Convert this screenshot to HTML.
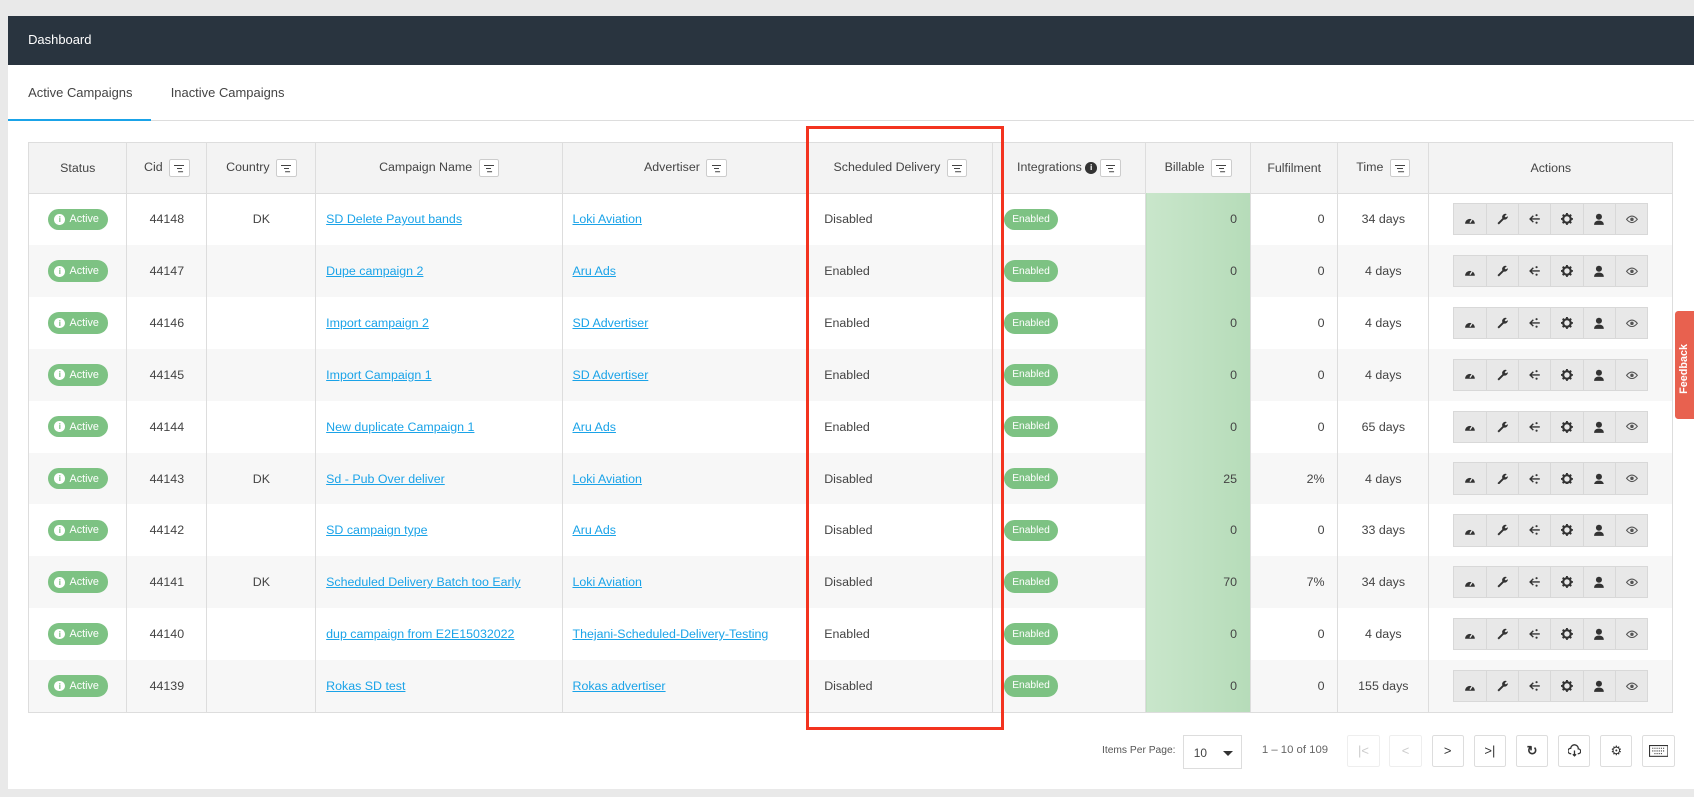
<!DOCTYPE html>
<html><head><meta charset="utf-8">
<style>
html,body{margin:0;padding:0;background:#e9e9e9;overflow:hidden;width:1694px;height:797px}
#w{zoom:1.0804;width:1568px;height:738px;position:relative;font-family:"Liberation Sans",sans-serif;font-size:11.5px;color:#444}
.card{position:absolute;left:7px;top:15px;width:1561px;height:715px;background:#fff}
.hdr{position:absolute;left:7px;top:15px;width:1561px;height:45px;background:#29343f;color:#fff;font-size:12px}
.hdr span{position:absolute;left:19px;top:15px}
.tab{position:absolute;top:79px;font-size:12px;color:#444}
.ul{position:absolute;left:7px;top:110px;width:133px;height:2px;background:#1aa3e8}
.bl{position:absolute;left:140px;top:111px;width:1428px;height:1px;background:#ddd}
table{position:absolute;left:26px;border-collapse:collapse;table-layout:fixed;width:1522px;border:1px solid #ddd}
td,th{border-left:1px solid #ddd;border-right:1px solid #ddd;height:48px;padding:0;font-weight:normal;font-size:11.5px}
th{background:#f3f3f3;height:47px;color:#444}
tr.e td{background:#f7f7f7}
td.c{text-align:center}
td.r{text-align:right;padding-right:12px}
td.l{padding-left:9px}
a{color:#1aa3e8;text-decoration:underline}
.fb{display:inline-block;width:19px;height:16px;border:1px solid #ccc;background:#fff;vertical-align:middle;margin-left:6px;border-radius:2px;position:relative;box-sizing:border-box}
.fb:before{content:"";position:absolute;left:4px;top:4px;width:9px;height:1px;background:#444}
.fb:after{content:"";position:absolute;left:6px;top:7px;width:5px;height:1px;background:#444;box-shadow:1px 3px 0 -0px #444}
.act{display:inline-flex;align-items:center;background:#7dc283;color:#fff;border-radius:10px;font-size:10px;height:20px;padding:0 8px 0 6px;box-sizing:border-box}
.act i{display:inline-block;width:10px;height:10px;border-radius:50%;background:#fff;color:#7dc283;font-style:normal;font-weight:bold;font-size:8px;text-align:center;line-height:10px;margin-right:4px}
.en{display:inline-flex;align-items:center;background:#7dc283;color:#fff;border-radius:10px;font-size:9.5px;height:20px;padding:0 8px;box-sizing:border-box}
td.bill{background:linear-gradient(90deg,#c9e6cb,#b6dcb9)!important;text-align:right;padding-right:12px}
.ag{display:inline-flex;border:1px solid #d8d8d8;background:#e8e8e8;vertical-align:middle}
.ag span{width:29px;height:28px;border-right:1px solid #d8d8d8;display:flex;align-items:center;justify-content:center}
.ag span:last-child{border-right:0}
.red{position:absolute;left:746px;top:117px;width:178px;height:553px;border:3px solid #f3331f}
.pg{position:absolute;top:680px;width:30px;height:30px;border:1px solid #ddd;border-radius:2px;box-sizing:border-box;display:flex;align-items:center;justify-content:center;color:#333;font-size:12px;background:#fff}
.fbk{position:absolute;left:1550px;top:288px;width:18px;height:100px;background:#e8614f;border-radius:3px 0 0 3px}
</style></head><body><div id="w">
<div class="card"></div>
<div class="hdr"><span>Dashboard</span></div>
<div class="tab" style="left:26px">Active Campaigns</div>
<div class="tab" style="left:158px">Inactive Campaigns</div>
<div class="ul"></div><div class="bl"></div>
<table style="top:131px">
<colgroup><col style="width:91px"><col style="width:74px"><col style="width:101px"><col style="width:228px"><col style="width:228px"><col style="width:170px"><col style="width:142px"><col style="width:97px"><col style="width:81px"><col style="width:84px"><col style="width:226px"></colgroup>
<tr><th>Status</th><th>Cid<span class="fb"></span></th><th>Country<span class="fb"></span></th><th>Campaign Name<span class="fb"></span></th><th>Advertiser<span class="fb"></span></th><th>Scheduled Delivery<span class="fb"></span></th><th>Integrations <span style="display:inline-block;width:11px;height:11px;border-radius:50%;background:#333;color:#fff;font-size:8px;line-height:11px;font-weight:bold;vertical-align:middle">i</span><span class="fb" style="margin-left:3px"></span></th><th>Billable<span class="fb"></span></th><th>Fulfilment</th><th>Time<span class="fb"></span></th><th>Actions</th></tr>
</table>
<div id="rows"></div>
<div class="red"></div>
<div style="position:absolute;left:1020px;top:690px;font-size:9.5px;color:#555">Items Per Page:</div>
<div style="position:absolute;left:1095px;top:680px;width:55px;height:32px;border:1px solid #ddd;box-sizing:border-box;font-size:11px"><span style="position:absolute;left:9px;top:10px">10</span><span style="position:absolute;left:36px;top:14px;border-left:5px solid transparent;border-right:5px solid transparent;border-top:5px solid #333"></span></div>
<div style="position:absolute;left:1168px;top:689px;font-size:10.5px;color:#666">1 – 10 of 109</div>
<div class="pg" style="left:1247px;color:#ccc;border-color:#eee">|&lt;</div>
<div class="pg" style="left:1286px;color:#ccc;border-color:#eee">&lt;</div>
<div class="pg" style="left:1325px">&gt;</div>
<div class="pg" style="left:1364px">&gt;|</div>
<div class="pg" style="left:1403px;font-weight:bold">&#x21bb;</div>
<div class="pg" style="left:1442px"><svg width="12" height="12" viewBox="0 0 12 12"><path d="M3 9H2.5a2.5 2.5 0 0 1 0-5 3.5 3.5 0 0 1 7 .5 2 2 0 0 1 0 4.5H9M6 6v5M4.5 9.5L6 11l1.5-1.5" fill="none" stroke="#333" stroke-width="1.2"/></svg></div>
<div class="pg" style="left:1481px">&#x2699;</div>
<div class="pg" style="left:1520px"><svg width="18" height="11"><rect x=".5" y=".5" width="17" height="10" fill="none" stroke="#333"/><path d="M3 3h12M3 5.5h12M5 8h8" stroke="#333" stroke-dasharray="1 1"/></svg></div>
<div class="fbk"><span style="position:absolute;left:3px;top:30px;color:#fff;font-size:10px;font-weight:bold;writing-mode:vertical-rl;transform:rotate(180deg)">Feedback</span></div>
<script>
var d=[["44148","DK","SD Delete Payout bands","Loki Aviation","Disabled","0","0","34 days"],
["44147","","Dupe campaign 2","Aru Ads","Enabled","0","0","4 days"],
["44146","","Import campaign 2","SD Advertiser","Enabled","0","0","4 days"],
["44145","","Import Campaign 1","SD Advertiser","Enabled","0","0","4 days"],
["44144","","New duplicate Campaign 1","Aru Ads","Enabled","0","0","65 days"],
["44143","DK","Sd - Pub Over deliver","Loki Aviation","Disabled","25","2%","4 days"],
["44142","","SD campaign type","Aru Ads","Disabled","0","0","33 days"],
["44141","DK","Scheduled Delivery Batch too Early","Loki Aviation","Disabled","70","7%","34 days"],
["44140","","dup campaign from E2E15032022","Thejani-Scheduled-Delivery-Testing","Enabled","0","0","4 days"],
["44139","","Rokas SD test","Rokas advertiser","Disabled","0","0","155 days"]];
var ic='<span><svg width="11" height="10"><path d="M1 9a4.5 4.5 0 1 1 9 0z" fill="#333"/><path d="M5.5 8l2-3" stroke="#e8e8e8" stroke-width="1.2"/></svg></span>'+
'<span><svg width="11" height="11"><path d="M2 10l5-5" stroke="#333" stroke-width="1.8"/><path d="M6 5a3 3 0 0 1 4-4l-2 2 1 1 2-1a3 3 0 0 1-4 3z" fill="#333"/></svg></span>'+
'<span><svg width="11" height="11"><path d="M1 5.5h9M4 2.5l-3 3 3 3" stroke="#333" stroke-width="1.3" fill="none"/><circle cx="7" cy="2" r="1" fill="#333"/><circle cx="7" cy="9" r="1" fill="#333"/></svg></span>'+
'<span><svg width="11" height="11" viewBox="0 0 11 11"><circle cx="5.5" cy="5.5" r="3.5" fill="none" stroke="#333" stroke-width="2"/><path d="M5.5 0v11M0 5.5h11M1.6 1.6l7.8 7.8M9.4 1.6l-7.8 7.8" stroke="#333" stroke-width="1.8" stroke-dasharray="2 7 2 0"/></svg></span>'+
'<span><svg width="11" height="11"><circle cx="5.5" cy="3.5" r="2.8" fill="#333"/><path d="M1 11c0-3 2-4 4.5-4s4.5 1 4.5 4z" fill="#333"/></svg></span>'+
'<span><svg width="11" height="8"><path d="M.5 4Q5.5-2 10.5 4Q5.5 10 .5 4z" fill="none" stroke="#555"/><circle cx="5.5" cy="4" r="1.6" fill="#555"/></svg></span>';
var h='<table style="top:179px;border-top:0"><colgroup><col style="width:91px"><col style="width:74px"><col style="width:101px"><col style="width:228px"><col style="width:228px"><col style="width:170px"><col style="width:142px"><col style="width:97px"><col style="width:81px"><col style="width:84px"><col style="width:226px"></colgroup>';
d.forEach(function(r,i){h+='<tr class="'+(i%2?'e':'')+'"><td class="c"><span class="act"><i>i</i>Active</span></td><td class="c">'+r[0]+'</td><td class="c">'+r[1]+'</td><td class="l"><a>'+r[2]+'</a></td><td class="l"><a>'+r[3]+'</a></td><td style="padding-left:14px">'+r[4]+'</td><td style="padding-left:10px"><span class="en">Enabled</span></td><td class="bill">'+r[5]+'</td><td class="r">'+r[6]+'</td><td class="c">'+r[7]+'</td><td class="c"><span class="ag">'+ic+'</span></td></tr>'});
h+='</table>';
document.getElementById('rows').outerHTML=h;
</script>
</div></body></html>
